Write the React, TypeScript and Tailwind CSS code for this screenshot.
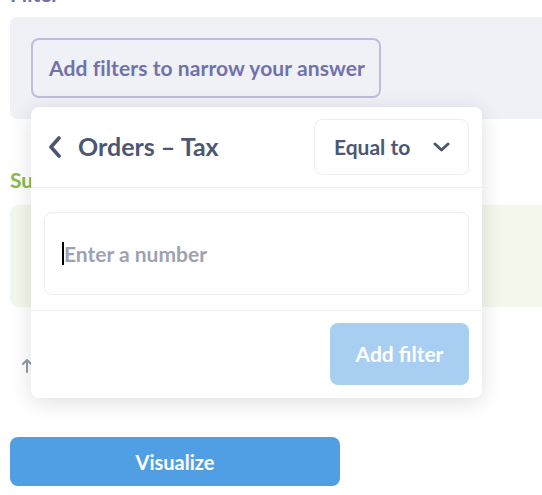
import React from "react";

export default function App() {
  return (
    <div
      className="relative w-[542px] h-[495px] overflow-hidden bg-white"
      style={{ fontFamily: "Lato, 'Noto Sans', sans-serif" }}
    >
      <div className="flex flex-col">
        <div className="mt-[-18px] h-[24px] pl-[10px] text-[21px] leading-[24px] font-bold text-[#7172AD]">
          Filter
        </div>
        <div className="mt-[11px] ml-[10px] mr-[-20px] h-[102px] rounded-l-[8px] bg-[#F0F0F7] pl-[21px] pt-[21px]">
          <div className="inline-flex h-[60px] w-[350px] items-center rounded-[8px] border-2 border-[#BDBDDC] pl-[16px] text-[21px] font-bold tracking-[0.1px] text-[#7172AD]">
            Add filters to narrow your answer
          </div>
        </div>
        <div className="mt-[49px] h-[24px] pl-[10px] text-[21px] leading-[24px] font-bold text-[#84BB4C]">
          Summarize
        </div>
        <div className="mt-[13px] ml-[10px] mr-[-20px] h-[102px] rounded-l-[8px] bg-[#F3F8ED]" />
        <div className="mt-[50px] flex h-[16px] items-center pl-[22px] text-[#949AAB]">
          <svg width="10" height="15" viewBox="0 0 10 15" fill="none" stroke="currentColor" strokeWidth="2" strokeLinecap="round" strokeLinejoin="round">
            <path d="M5 14V2M1 6l4-4 4 4" />
          </svg>
        </div>
        <div className="mt-[64px] ml-[10px] flex h-[49px] w-[330px] items-center justify-center rounded-[8px] bg-[#509EE3] text-[20px] font-bold text-white">
          Visualize
        </div>
      </div>

      <div className="absolute left-[31px] top-[107px] flex h-[291px] w-[451px] flex-col rounded-[8px] bg-white shadow-[0_4px_22px_rgba(0,0,0,0.13)]">
        <div className="flex h-[81px] items-start justify-between border-b border-[#EEEEEE] pl-[17px] pr-[13px] pt-[12px]">
          <div className="flex h-[56px] items-center gap-[16px]">
            <svg width="14" height="22" viewBox="0 0 14 22" fill="none" stroke="#4C5773" strokeWidth="3.6" strokeLinecap="round" strokeLinejoin="round">
              <path d="M11 2L3 11l8 9" />
            </svg>
            <span className="text-[25px] font-bold text-[#4C5773]">Orders – Tax</span>
          </div>
          <div className="flex h-[56px] w-[155px] items-center rounded-[8px] border border-[#EEECEC] pl-[19px] pr-[18px]">
            <span className="text-[21px] font-bold text-[#4C5773]">Equal to</span>
            <svg className="ml-auto" width="17" height="10" viewBox="0 0 17 10" fill="none" stroke="#4C5773" strokeWidth="3" strokeLinecap="round" strokeLinejoin="round">
              <path d="M2 2l6.5 6L15 2" />
            </svg>
          </div>
        </div>
        <div className="h-[123px] border-b border-[#EEEEEE] px-[13px] pt-[24px]">
          <div className="flex h-[83px] items-center rounded-[8px] border border-[#EEECEC] pl-[17px]">
            <div className="h-[23px] w-[2px] bg-black" />
            <span className="text-[21px] font-bold text-[#9DA2B2]">Enter a number</span>
          </div>
        </div>
        <div className="flex flex-1 items-start justify-end pr-[13px] pt-[12px]">
          <div className="flex h-[62px] w-[139px] items-center justify-center rounded-[8px] bg-[#A8CEF2] text-[21px] font-bold text-white">
            Add filter
          </div>
        </div>
      </div>
    </div>
  );
}
